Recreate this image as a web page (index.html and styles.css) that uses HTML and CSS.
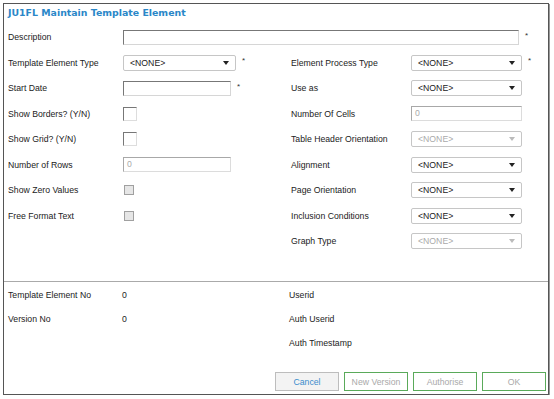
FILE: index.html
```html
<!DOCTYPE html>
<html lang="en">
<head>
    <meta charset="UTF-8">
    <title>JU1FL Maintain Template Element</title>
    <link rel="stylesheet" href="styles.css">
</head>
<body>

    <div class="window">
        <h1 class="title">JU1FL Maintain Template Element</h1>

        <div class="form">
            <label class="lbl">Description</label>
            <div class="field span3"><div class="text desc"></div><span class="req">*</span></div>

            <label class="lbl">Template Element Type</label>
            <div class="field"><div class="select left">&lt;NONE&gt;</div><span class="req">*</span></div>
            <label class="lbl">Element Process Type</label>
            <div class="field"><div class="select">&lt;NONE&gt;</div><span class="req">*</span></div>

            <label class="lbl">Start Date</label>
            <div class="field"><div class="text date"></div><span class="req">*</span></div>
            <label class="lbl">Use as</label>
            <div class="field"><div class="select">&lt;NONE&gt;</div></div>

            <label class="lbl">Show Borders? (Y/N)</label>
            <div class="field"><div class="check"></div></div>
            <label class="lbl">Number Of Cells</label>
            <div class="field"><div class="text num disabled">0</div></div>

            <label class="lbl">Show Grid? (Y/N)</label>
            <div class="field"><div class="check"></div></div>
            <label class="lbl">Table Header Orientation</label>
            <div class="field"><div class="select disabled">&lt;NONE&gt;</div></div>

            <label class="lbl">Number of Rows</label>
            <div class="field"><div class="text date disabled">0</div></div>
            <label class="lbl">Alignment</label>
            <div class="field"><div class="select">&lt;NONE&gt;</div></div>

            <label class="lbl">Show Zero Values</label>
            <div class="field"><div class="check disabled"></div></div>
            <label class="lbl">Page Orientation</label>
            <div class="field"><div class="select">&lt;NONE&gt;</div></div>

            <label class="lbl">Free Format Text</label>
            <div class="field"><div class="check disabled"></div></div>
            <label class="lbl">Inclusion Conditions</label>
            <div class="field"><div class="select">&lt;NONE&gt;</div></div>

            <span></span>
            <span></span>
            <label class="lbl">Graph Type</label>
            <div class="field"><div class="select disabled">&lt;NONE&gt;</div></div>
        </div>

        <div class="divider"></div>

        <div class="info">
            <span class="lbl">Template Element No</span>
            <span class="val">0</span>
            <span class="lbl">Userid</span>
            <span></span>

            <span class="lbl">Version No</span>
            <span class="val">0</span>
            <span class="lbl">Auth Userid</span>
            <span></span>

            <span></span>
            <span></span>
            <span class="lbl">Auth Timestamp</span>
            <span></span>
        </div>

        <div class="actions">
            <button class="btn cancel">Cancel</button>
            <button class="btn off">New Version</button>
            <button class="btn off">Authorise</button>
            <button class="btn off">OK</button>
        </div>
    </div>

</body>
</html>
```

FILE: styles.css
```css
body {
    margin: 0;
    background-color: #fff;
    font-family: "Liberation Sans", Arial, sans-serif;
    font-size: 8.7px;
    color: #222;
}
.window {
    margin: 3px 0 0 3px;
    width: 546px;
    height: 392px;
    box-sizing: border-box;
    border: 1px solid #555;
    box-shadow: 1px 1px 0 #999;
    display: flex;
    flex-direction: column;
}
.title {
    margin: 0;
    height: 20.5px;
    padding-left: 4px;
    font-family: "DejaVu Sans", Verdana, sans-serif;
    font-size: 9.4px;
    font-weight: bold;
    line-height: 18px;
    color: #2a87c8;
}
.form {
    display: grid;
    grid-template-columns: 115px 168px 120px 1fr;
    grid-auto-rows: 25.5px;
    padding-left: 4px;
    align-items: center;
}
.lbl {
    white-space: nowrap;
}
.field {
    display: flex;
    align-items: center;
}
.span3 {
    grid-column: span 3;
}
.req {
    margin-left: 6px;
    margin-top: -4px;
    font-size: 8px;
    color: #333;
}
.text {
    box-sizing: border-box;
    height: 15px;
    border-top: 1px solid #777;
    border-left: 1px solid #777;
    border-right: 1px solid #d6d6d6;
    border-bottom: 1px solid #d6d6d6;
    padding-left: 3px;
    line-height: 13px;
    background-color: #fff;
}
.desc {
    width: 396px;
}
.date {
    width: 108px;
}
.num {
    width: 111px;
}
.text.disabled {
    border-top-color: #a8a8a8;
    border-left-color: #a8a8a8;
    border-right-color: #dcdcdc;
    border-bottom-color: #dcdcdc;
    color: #aaa;
}
.select {
    position: relative;
    box-sizing: border-box;
    width: 111px;
    height: 16px;
    border: 1px solid #c6c6c6;
    border-radius: 2px;
    padding-left: 6px;
    line-height: 14px;
    color: #222;
}
.select.left {
    width: 113px;
}
.select::after {
    content: "";
    position: absolute;
    right: 6px;
    top: 5px;
    border-left: 3px solid transparent;
    border-right: 3px solid transparent;
    border-top: 4px solid #222;
}
.select.disabled {
    color: #aaa;
}
.select.disabled::after {
    border-top-color: #bbb;
}
.check {
    box-sizing: border-box;
    width: 14px;
    height: 14px;
    border-top: 1px solid #777;
    border-left: 1px solid #777;
    border-right: 1px solid #ddd;
    border-bottom: 1px solid #ddd;
}
.check.disabled {
    width: 10px;
    height: 10px;
    margin-left: 1px;
    border: 1px solid #a0a0a0;
    background-color: #e6e6e6;
}
.divider {
    margin-top: 27px;
    height: 1px;
    background-color: #aaa;
}
.info {
    display: grid;
    grid-template-columns: 114px 167px 120px 1fr;
    grid-auto-rows: 24px;
    padding: 1px 0 0 4px;
    align-items: center;
}
.actions {
    margin-top: auto;
    display: flex;
    justify-content: flex-end;
    gap: 5px;
    padding: 0 2px 3px 0;
}
.btn {
    width: 64px;
    height: 19px;
    padding: 0;
    font-family: "Liberation Sans", Arial, sans-serif;
    font-size: 8.7px;
    background-color: #fff;
    cursor: pointer;
}
.cancel {
    border: 1px solid #bdbdbd;
    background-color: #f3f3f3;
    color: #3a8ccc;
}
.off {
    border: 1px solid #5aaa5a;
    color: #a9a9a9;
}
```
